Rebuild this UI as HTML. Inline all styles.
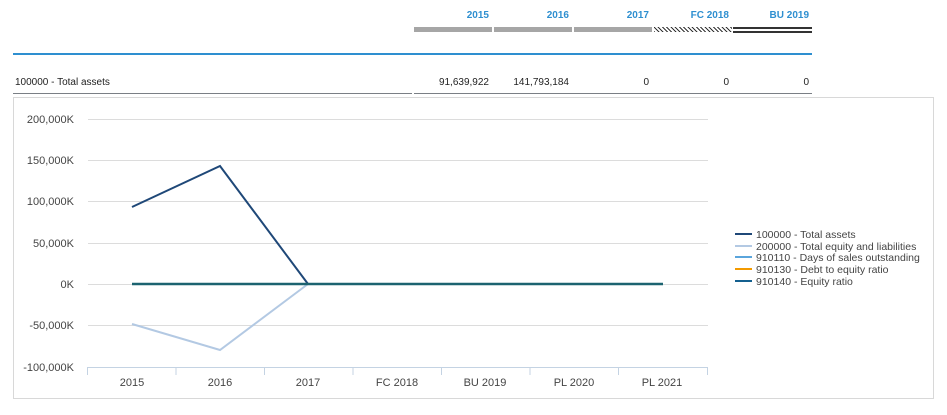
<!DOCTYPE html>
<html><head><meta charset="utf-8"><style>
body{margin:0;width:947px;height:415px;background:#fff;font-family:"Liberation Sans",sans-serif;position:relative;overflow:hidden}
.a{position:absolute}
.yr{position:absolute;top:10px;width:76px;text-align:right;font-size:10px;font-weight:bold;color:#2e8fd0}
.bar{position:absolute;top:27px;width:78px;height:5px;background:#a6a6a6}
.val{position:absolute;top:77px;width:76px;text-align:right;font-size:10px;color:#222}
.ul{position:absolute;top:93px;height:1px;background:#7a7f85}
</style></head><body>
<div class="yr" style="left:413px">2015</div>
<div class="yr" style="left:493px">2016</div>
<div class="yr" style="left:573px">2017</div>
<div class="yr" style="left:653px">FC 2018</div>
<div class="yr" style="left:733px">BU 2019</div>
<div class="bar" style="left:414px"></div>
<div class="bar" style="left:494px"></div>
<div class="bar" style="left:574px"></div>
<div class="a" style="left:654px;top:27px;width:78px;height:5px;background:repeating-linear-gradient(45deg,#333 0 1px,#fff 1px 3px)"></div>
<div class="a" style="left:733px;top:27px;width:79px;height:2px;background:#333"></div>
<div class="a" style="left:733px;top:31px;width:79px;height:2px;background:#333"></div>
<div class="a" style="left:13px;top:53px;width:799px;height:2px;background:#2e8fd0"></div>
<div class="a" style="left:15px;top:77px;font-size:10px;color:#222">100000 - Total assets</div>
<div class="val" style="left:413px">91,639,922</div>
<div class="val" style="left:493px">141,793,184</div>
<div class="val" style="left:573px">0</div>
<div class="val" style="left:653px">0</div>
<div class="val" style="left:733px">0</div>
<div class="ul" style="left:13px;width:399px"></div>
<div class="ul" style="left:414px;width:398px"></div>
<div class="a" style="left:13px;top:97px;width:919px;height:300px;border:1px solid #d8d8d8"></div>
<svg class="a" style="left:0;top:0" width="947" height="415" font-family="Liberation Sans,sans-serif" font-size="11" fill="#444">
<g stroke="#dcdcdc" stroke-width="1">
<line x1="88" y1="119.5" x2="708" y2="119.5"/><line x1="88" y1="160.5" x2="708" y2="160.5"/>
<line x1="88" y1="201.5" x2="708" y2="201.5"/><line x1="88" y1="243.5" x2="708" y2="243.5"/>
<line x1="88" y1="284.5" x2="708" y2="284.5"/><line x1="88" y1="325.5" x2="708" y2="325.5"/>
</g>
<g stroke="#c4d3e3" stroke-width="1">
<line x1="87" y1="367.5" x2="708" y2="367.5"/>
<line x1="87.5" y1="367" x2="87.5" y2="375"/><line x1="176" y1="367" x2="176" y2="375"/>
<line x1="264.5" y1="367" x2="264.5" y2="375"/><line x1="353" y1="367" x2="353" y2="375"/>
<line x1="441.5" y1="367" x2="441.5" y2="375"/><line x1="530" y1="367" x2="530" y2="375"/>
<line x1="618.5" y1="367" x2="618.5" y2="375"/><line x1="707.5" y1="367" x2="707.5" y2="375"/>
</g>
<g text-anchor="end">
<text x="74" y="123">200,000K</text><text x="74" y="164">150,000K</text>
<text x="74" y="205">100,000K</text><text x="74" y="247">50,000K</text>
<text x="74" y="288">0K</text><text x="74" y="329">-50,000K</text><text x="74" y="371">-100,000K</text>
</g>
<g text-anchor="middle">
<text x="132" y="386">2015</text><text x="220" y="386">2016</text><text x="308" y="386">2017</text>
<text x="397" y="386">FC 2018</text><text x="485" y="386">BU 2019</text><text x="574" y="386">PL 2020</text><text x="662" y="386">PL 2021</text>
</g>
<polyline points="132,324 220,350 308,284" fill="none" stroke="#b3c9e3" stroke-width="2"/>
<polyline points="132,207 220,166 308,284" fill="none" stroke="#1f4878" stroke-width="2"/>
<line x1="132" y1="284" x2="663" y2="284" stroke="#1c6370" stroke-width="2.5"/>
<g stroke-width="2">
<line x1="735" y1="234" x2="752" y2="234" stroke="#1f4878"/>
<line x1="735" y1="246" x2="752" y2="246" stroke="#b3c9e3"/>
<line x1="735" y1="257" x2="752" y2="257" stroke="#5aa5dc"/>
<line x1="735" y1="269" x2="752" y2="269" stroke="#f39a00"/>
<line x1="735" y1="281" x2="752" y2="281" stroke="#14608f"/>
</g>
<g font-size="10.5">
<text x="756" y="238">100000 - Total assets</text>
<text x="756" y="250">200000 - Total equity and liabilities</text>
<text x="756" y="261">910110 - Days of sales outstanding</text>
<text x="756" y="273">910130 - Debt to equity ratio</text>
<text x="756" y="285">910140 - Equity ratio</text>
</g>
</svg>
</body></html>
